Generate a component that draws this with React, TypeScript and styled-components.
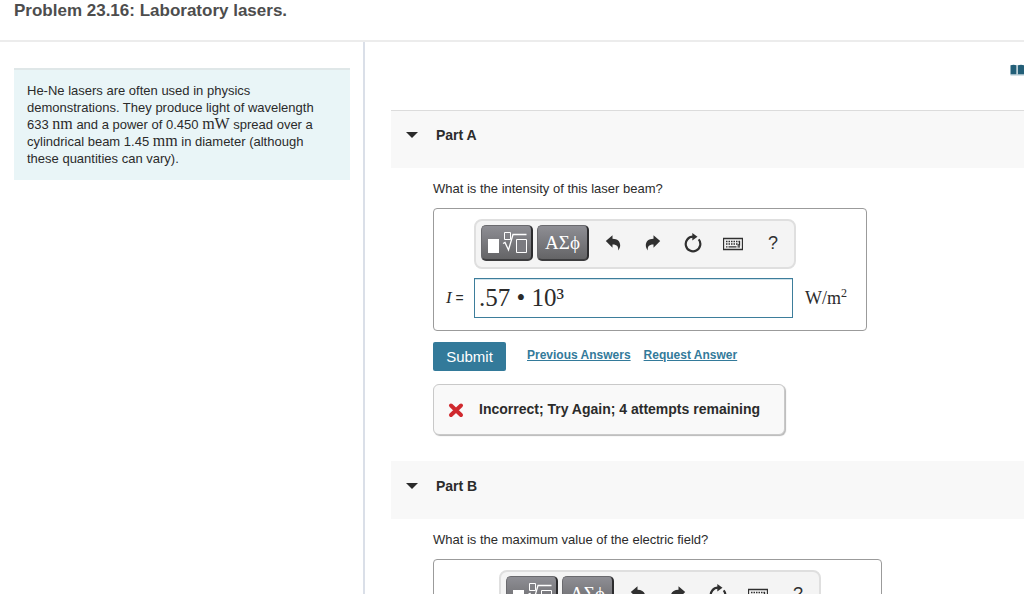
import React, { useState } from "react";
import styled, { createGlobalStyle } from "styled-components";

const sans = `"Liberation Sans", Arial, Helvetica, sans-serif`;
const serif = `"Liberation Serif", "Times New Roman", serif`;

const GlobalStyle = createGlobalStyle`
  *, *::before, *::after { box-sizing: border-box; }
  body {
    margin: 0;
    background: #fff;
    color: #2b2b2b;
    font: 13px/17px ${sans};
  }
  button, input { font: inherit; color: inherit; }
`;

const Page = styled.div`
  display: flex;
  flex-direction: column;
  height: 100vh;
  overflow: hidden;
`;

const Header = styled.header`
  flex: none;
  padding: 0 14px 18px;
  border-bottom: 2px solid #ececec;
`;

const Title = styled.h1`
  margin: 0;
  font-size: 17px;
  line-height: 22px;
  color: #4d4d4d;
`;

const Columns = styled.div`
  display: flex;
  flex: 1;
  min-height: 0;
`;

const Sidebar = styled.aside`
  flex: none;
  width: 365px;
  padding: 26px 13px 0 14px;
  border-right: 2px solid #dadfe8;
`;

const Introduction = styled.p`
  margin: 0;
  padding: 12px 13px 13px;
  border-top: 2px solid #dfe7e8;
  background: #e9f5f7;
`;

const Unit = styled.span`
  font-family: ${serif};
  font-size: 16px;
  line-height: 0;
`;

const Main = styled.main`
  flex: 1;
  min-width: 0;
  padding-left: 26px;
  overflow-y: auto;
  scrollbar-width: none;
`;

const PageTools = styled.nav`
  display: flex;
  justify-content: flex-end;
  padding: 22px 0 34px;
`;

const ToolLink = styled.a`
  display: flex;
  height: 12px;
  color: #235f78;
`;

const PartSection = styled.section`
  padding-bottom: 26px;
`;

const PartHeader = styled.h2<{ $ruled?: boolean }>`
  margin: 0;
  height: 58px;
  border-top: 1px solid ${(p) => (p.$ruled ? "#dcdcdc" : "#f8f8f8")};
  background: #f8f8f8;
  font-size: 14px;
  line-height: 18px;
`;

const PartToggle = styled.button`
  display: flex;
  align-items: center;
  gap: 18px;
  padding: 15px 15px;
  border: 0;
  background: none;
  cursor: pointer;
`;

const PartBody = styled.div`
  padding: 12px 20px 0 42px;
`;

const Question = styled.p`
  margin: 0 0 11px;
`;

const AnswerBox = styled.div<{ $labelWidth: number }>`
  display: inline-grid;
  grid-template-columns: ${(p) => p.$labelWidth}px auto auto;
  align-items: center;
  row-gap: 9px;
  padding: 10px 19px 12px 12px;
  border: 1px solid #9b9b9b;
  border-radius: 4px;
  vertical-align: top;
`;

const MathToolbar = styled.div`
  grid-column: 2;
  display: flex;
  align-items: flex-start;
  padding: 4px 1px 4px 5px;
  height: 50px;
  border: 2px solid #dfdfdf;
  border-radius: 8px;
  background: #f4f4f4;
`;

const PaletteButton = styled.button`
  display: flex;
  align-items: center;
  justify-content: center;
  width: 52px;
  height: 36px;
  margin-right: 4px;
  padding: 0;
  border: 1px solid #6a6a6e;
  border-right: 2px solid #2c2c2e;
  border-bottom: 2px solid #3c3c3e;
  border-radius: 5px;
  background: linear-gradient(#8e8e94, #646466);
  color: #fff;
  font-family: ${serif};
  font-size: 19px;
  cursor: pointer;
`;

const IconGroup = styled.div`
  display: flex;
`;

const IconButton = styled.button`
  display: flex;
  align-items: center;
  justify-content: center;
  width: 40px;
  height: 36px;
  padding: 0;
  border: 0;
  background: none;
  color: #303030;
  font-size: 18px;
  cursor: pointer;
`;

const VariableLabel = styled.label`
  grid-column: 1;
  font-size: 14px;
  white-space: nowrap;

  i {
    font-family: ${serif};
    font-size: 17px;
    line-height: 0;
  }
`;

const AnswerField = styled.input`
  grid-column: 2;
  width: 319px;
  height: 40px;
  padding: 0 4px;
  border: 1px solid #3d7d9b;
  background: #fff;
  box-shadow: inset 0 1px 0 #cfe2ea;
  font-family: ${serif};
  font-size: 25px;
  outline: none;
`;

const AnswerUnits = styled.span`
  padding-left: 9px;
  font-family: ${serif};
  font-size: 18px;
  line-height: 20px;

  sup {
    font-size: 12px;
    line-height: 0;
  }
`;

const Actions = styled.div`
  display: flex;
  align-items: center;
  gap: 13px;
  margin-top: 11px;
`;

const SubmitButton = styled.button`
  width: 73px;
  height: 29px;
  margin-right: 8px;
  padding: 0;
  border: 0;
  border-radius: 2px;
  background: #337a9a;
  color: #fff;
  font-size: 15px;
  cursor: pointer;
`;

const ActionLink = styled.a`
  padding-bottom: 2px;
  color: #337a9a;
  font-size: 12px;
  font-weight: bold;
  line-height: 17px;
`;

const Feedback = styled.div`
  display: flex;
  align-items: center;
  gap: 15px;
  width: fit-content;
  height: 51px;
  margin-top: 13px;
  padding: 0 24px 0 14px;
  border: 1px solid #c9c9c9;
  border-radius: 6px;
  background: #f9f9f9;
  box-shadow: 1px 1px 1px #b8b8b8;
  font-size: 14px;
  font-weight: bold;
`;

const BookIcon = () => (
  <svg width="14" height="12" viewBox="0 0 14 12" fill="currentColor" aria-hidden="true">
    <path d="M.5 1.200Q3.500 .3 6.500 1.200V10.500H.5zM8 1.200Q11 .3 14 1.200V10.500H8z" />
    <path d="M.5 11H14M7.250 1V11" stroke="#a9c3cd" />
  </svg>
);

const CaretIcon = () => (
  <svg width="12" height="6" viewBox="0 0 12 6" fill="currentColor" aria-hidden="true">
    <path d="M0 0h12L6 6z" />
  </svg>
);

const TemplatesIcon = () => (
  <svg width="42" height="24" viewBox="0 0 42 24" fill="none" stroke="#fff" aria-hidden="true">
    <path d="M2 8h11v14H2z" fill="#fff" stroke="none" />
    <path d="M18.500 1.500h6v7h-6z" />
    <path d="M17 12.500l2-1 3.500 7.500L27 3.500h13.500" strokeWidth="1.300" />
    <path d="M30.500 8.500h10v13h-10z" fill="#7b7b80" />
  </svg>
);

const UndoIcon = () => (
  <svg width="16" height="16" viewBox="0 0 16 16" fill="currentColor" aria-hidden="true">
    <path d="M.8 6L7.500 .3v3.400c5 .1 7.700 2.700 7.700 6.600 0 2-.8 3.800-2 5.200.3-3.800-.8-6-5.700-6v3.200z" />
  </svg>
);

const RedoIcon = () => (
  <svg width="16" height="16" viewBox="0 0 16 16" fill="currentColor" aria-hidden="true">
    <path d="M15.200 6L8.500 .3v3.400C3.500 3.800 .8 6.400 .8 10.300c0 2 .8 3.800 2 5.200-.3-3.800.8-6 5.700-6v3.200z" />
  </svg>
);

const ResetIcon = () => (
  <svg width="20" height="20" viewBox="0 0 20 20" aria-hidden="true">
    <path d="M10 3.700A7.300 7.300 0 1 0 15.700 6.400" fill="none" stroke="currentColor" strokeWidth="2.200" />
    <path d="M9.300 0l5.200 3.800-5.200 3.600z" fill="currentColor" />
  </svg>
);

const KeyboardIcon = () => (
  <svg width="20" height="18" viewBox="0 0 20 18" fill="none" stroke="currentColor" aria-hidden="true">
    <path d="M.5 4.500h19v11H.5z" strokeWidth="1.300" />
    <path d="M3 7.500h14" strokeDasharray="1.500 1" strokeWidth="1.300" />
    <path d="M3 10h12" strokeDasharray="1.500 1" strokeWidth="1.300" />
    <path d="M3 12.800h1.500M5.500 12.800h8M14.500 12.800H17M16.500 7v4h-2" strokeWidth="1.300" />
  </svg>
);

const CrossIcon = () => (
  <svg width="16" height="16" viewBox="0 0 16 16" aria-hidden="true">
    <path d="M3 3.500l10 9.500M13 3.500l-10 9.500" stroke="#d0292e" strokeWidth="4" strokeLinecap="round" />
  </svg>
);

type PartProps = {
  id: string;
  name: string;
  question: string;
  labelWidth: number;
  label: React.ReactNode;
  units: React.ReactNode;
  initial?: string;
  ruled?: boolean;
  feedback?: string;
};

function Part({ id, name, question, labelWidth, label, units, initial = "", ruled, feedback }: PartProps) {
  const [open, setOpen] = useState(true);
  const [value, setValue] = useState(initial);
  return (
    <PartSection>
      <PartHeader $ruled={ruled}>
        <PartToggle type="button" aria-expanded={open} onClick={() => setOpen(!open)}>
          <CaretIcon />
          {name}
        </PartToggle>
      </PartHeader>
      {open && (
        <PartBody>
          <Question>{question}</Question>
          <AnswerBox $labelWidth={labelWidth}>
            <MathToolbar role="toolbar" aria-label="Equation tools">
              <PaletteButton type="button" aria-label="Templates">
                <TemplatesIcon />
              </PaletteButton>
              <PaletteButton type="button">ΑΣϕ</PaletteButton>
              <IconGroup>
                <IconButton type="button" aria-label="Undo"><UndoIcon /></IconButton>
                <IconButton type="button" aria-label="Redo"><RedoIcon /></IconButton>
                <IconButton type="button" aria-label="Reset"><ResetIcon /></IconButton>
                <IconButton type="button" aria-label="Keyboard shortcuts"><KeyboardIcon /></IconButton>
                <IconButton type="button">?</IconButton>
              </IconGroup>
            </MathToolbar>
            <VariableLabel htmlFor={id}>{label} =</VariableLabel>
            <AnswerField id={id} value={value} onChange={(e) => setValue(e.target.value)} />
            <AnswerUnits>{units}</AnswerUnits>
          </AnswerBox>
          <Actions>
            <SubmitButton type="button">Submit</SubmitButton>
            {feedback && <ActionLink href="#previous">Previous Answers</ActionLink>}
            <ActionLink href="#request">Request Answer</ActionLink>
          </Actions>
          {feedback && (
            <Feedback role="status">
              <CrossIcon />
              {feedback}
            </Feedback>
          )}
        </PartBody>
      )}
    </PartSection>
  );
}

export default function App() {
  return (
    <Page>
      <GlobalStyle />
      <Header>
        <Title>Problem 23.16: Laboratory lasers.</Title>
      </Header>
      <Columns>
        <Sidebar>
          <Introduction>
            He-Ne lasers are often used in physics demonstrations. They produce light of wavelength
            633 <Unit>nm</Unit> and a power of 0.450 <Unit>mW</Unit> spread over a cylindrical beam
            1.45 <Unit>mm</Unit> in diameter (although these quantities can vary).
          </Introduction>
        </Sidebar>
        <Main>
          <PageTools>
            <ToolLink href="#review" aria-label="Review">
              <BookIcon />
            </ToolLink>
          </PageTools>
          <Part
            id="intensity"
            name="Part A"
            question="What is the intensity of this laser beam?"
            labelWidth={28}
            label={<i>I</i>}
            units={<>W/m<sup>2</sup></>}
            initial=".57 • 10³"
            ruled
            feedback="Incorrect; Try Again; 4 attempts remaining"
          />
          <Part
            id="field"
            name="Part B"
            question="What is the maximum value of the electric field?"
            labelWidth={53}
            label={<><i>E</i><sub>0</sub></>}
            units="V/m"
          />
        </Main>
      </Columns>
    </Page>
  );
}
